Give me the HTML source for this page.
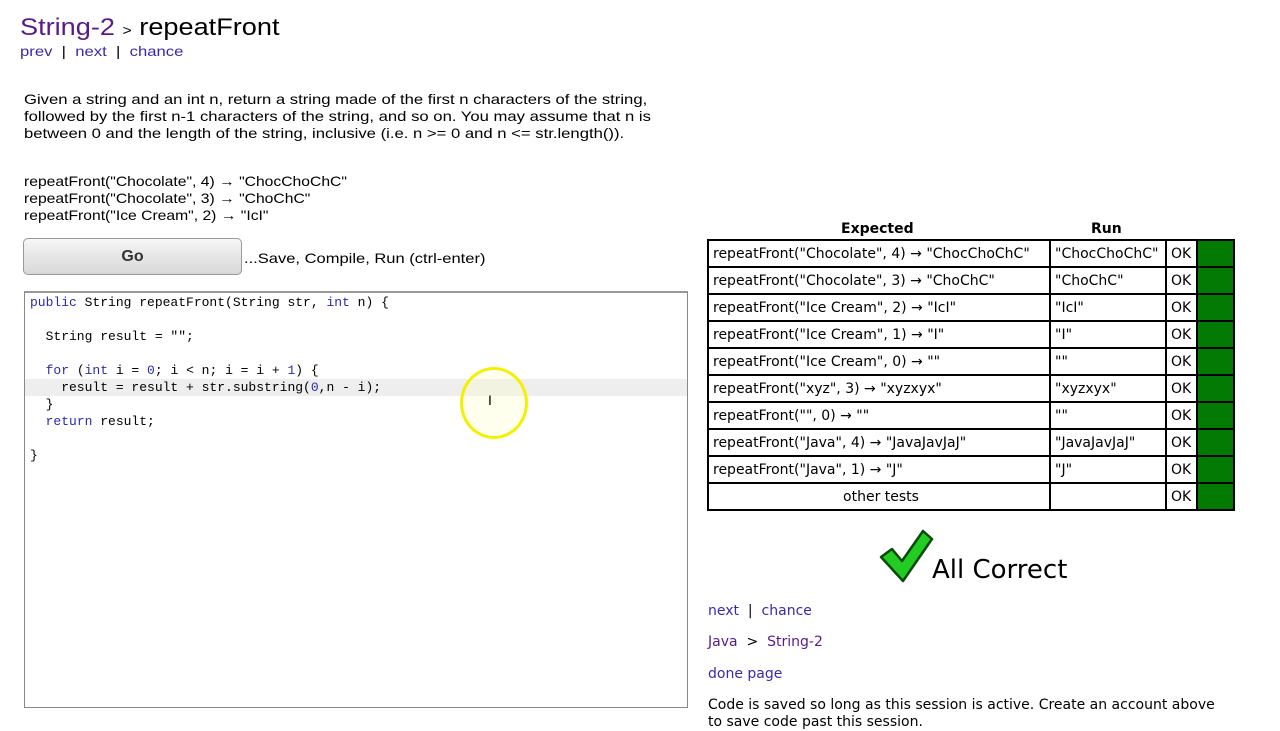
<!DOCTYPE html>
<html><head><meta charset="utf-8"><style>
body{margin:0;width:1280px;height:720px;overflow:hidden;background:#fff;font-family:"Liberation Sans",sans-serif;position:relative;color:#000}
.a{position:absolute;white-space:nowrap}
.sx{transform-origin:0 0;transform:scaleX(1.19)}
.v{font-family:"DejaVu Sans",Verdana,sans-serif}
.lk{color:#3a2aa8}
.pu{color:#5a1a8a}
table{border-collapse:collapse;position:absolute;left:707px;top:239px;font-size:14px;font-family:"DejaVu Sans",Verdana,sans-serif;table-layout:fixed;width:526px}
td{border:2px solid #000;height:25px;padding:0 0 0 4px;white-space:nowrap;overflow:hidden}
td.g{background:#037a03;padding:0}
</style></head><body>
<div class="a sx" style="left:20px;top:14px;font-size:24px;transform:scaleX(1.13)"><span class="pu">String-2</span> <span style="font-size:14px">&gt;</span> repeatFront</div>
<div class="a lk sx" style="left:20px;top:43px;font-size:14px">prev &nbsp;<span style="color:#000">|</span>&nbsp; next &nbsp;<span style="color:#000">|</span>&nbsp; chance</div>
<div class="a sx" style="left:24px;top:91px;font-size:14px;line-height:17px">Given a string and an int n, return a string made of the first n characters of the string,<br>followed by the first n-1 characters of the string, and so on. You may assume that n is<br>between 0 and the length of the string, inclusive (i.e. n &gt;= 0 and n &lt;= str.length()).</div>
<div class="a sx" style="left:24px;top:173px;font-size:14px;line-height:17px;transform:scaleX(1.12)">repeatFront("Chocolate", 4) → "ChocChoChC"<br>repeatFront("Chocolate", 3) → "ChoChC"<br>repeatFront("Ice Cream", 2) → "IcI"</div>
<div class="a" style="left:23px;top:238px;width:217px;height:35px;border:1px solid #999;border-radius:5px;background:linear-gradient(#f6f6f6,#d8d8d8);text-align:center;line-height:36px;font-size:16px;font-weight:bold;color:#333">Go</div>
<div class="a sx" style="left:244px;top:250px;font-size:14px;transform:scaleX(1.18)">...Save, Compile, Run (ctrl-enter)</div>
<div style="position:absolute;left:24px;top:291px;width:662px;height:414px;border:1px solid #888;border-top:2px solid #999;font-family:'Liberation Mono',monospace;font-size:13px;line-height:17px">
<div style="height:17px;padding-left:5px;white-space:pre;margin-top:1px"><span style="color:#2a2ab0">public</span> String repeatFront(String str, <span style="color:#2a2ab0">int</span> n) {</div>
<div style="height:17px"></div>
<div style="height:17px;padding-left:5px;white-space:pre">  String result = "";</div>
<div style="height:17px"></div>
<div style="height:17px;padding-left:5px;white-space:pre">  <span style="color:#2a2ab0">for</span> (<span style="color:#2a2ab0">int</span> i = <span style="color:#2a2ab0">0</span>; i &lt; n; i = i + <span style="color:#2a2ab0">1</span>) {</div>
<div style="height:17px;padding-left:5px;white-space:pre;background:#eee">    result = result + str.substring(<span style="color:#2a2ab0">0</span>,n - i);</div>
<div style="height:17px;padding-left:5px;white-space:pre">  }</div>
<div style="height:17px;padding-left:5px;white-space:pre">  <span style="color:#2a2ab0">return</span> result;</div>
<div style="height:17px"></div>
<div style="height:17px;padding-left:5px;white-space:pre">}</div>
</div>
<div class="a" style="left:460px;top:367px;width:62px;height:66px;border:3px solid #f4f000;border-radius:50%;background:rgba(255,255,200,0.3)"></div>
<div class="a" style="left:488px;top:392px;font-size:14px">I</div>
<div class="a v" style="left:841px;top:221px;font-size:14px;font-weight:bold">Expected</div>
<div class="a v" style="left:1091px;top:221px;font-size:14px;font-weight:bold">Run</div>
<table>
<colgroup><col style="width:342px"><col style="width:116px"><col style="width:31px"><col style="width:37px"></colgroup>
<tr><td>repeatFront("Chocolate", 4) → "ChocChoChC"</td><td>"ChocChoChC"</td><td>OK</td><td class="g"></td></tr>
<tr><td>repeatFront("Chocolate", 3) → "ChoChC"</td><td>"ChoChC"</td><td>OK</td><td class="g"></td></tr>
<tr><td>repeatFront("Ice Cream", 2) → "IcI"</td><td>"IcI"</td><td>OK</td><td class="g"></td></tr>
<tr><td>repeatFront("Ice Cream", 1) → "I"</td><td>"I"</td><td>OK</td><td class="g"></td></tr>
<tr><td>repeatFront("Ice Cream", 0) → ""</td><td>""</td><td>OK</td><td class="g"></td></tr>
<tr><td>repeatFront("xyz", 3) → "xyzxyx"</td><td>"xyzxyx"</td><td>OK</td><td class="g"></td></tr>
<tr><td>repeatFront("", 0) → ""</td><td>""</td><td>OK</td><td class="g"></td></tr>
<tr><td>repeatFront("Java", 4) → "JavaJavJaJ"</td><td>"JavaJavJaJ"</td><td>OK</td><td class="g"></td></tr>
<tr><td>repeatFront("Java", 1) → "J"</td><td>"J"</td><td>OK</td><td class="g"></td></tr>
<tr><td style="text-align:center">other tests</td><td></td><td>OK</td><td class="g"></td></tr>
</table>
<svg class="a" style="left:878px;top:527px" width="56" height="56" viewBox="0 0 56 56"><path d="M3 30 L14 22 L24 34 L45 4 L54 12 L25 54 Z" fill="#22cc22" stroke="#0a4a0a" stroke-width="2.5" stroke-linejoin="round"/></svg>
<div class="a v" style="left:932px;top:555px;font-size:26px">All Correct</div>
<div class="a lk v" style="left:708px;top:603px;font-size:14px">next &nbsp;<span style="color:#000">|</span>&nbsp; chance</div>
<div class="a v" style="left:708px;top:634px;font-size:14px"><span class="pu">Java</span> &nbsp;&gt;&nbsp; <span class="pu">String-2</span></div>
<div class="a lk v" style="left:708px;top:666px;font-size:14px">done page</div>
<div class="a v" style="left:708px;top:697px;font-size:14px;line-height:17px">Code is saved so long as this session is active. Create an account above<br>to save code past this session.</div>
</body></html>
